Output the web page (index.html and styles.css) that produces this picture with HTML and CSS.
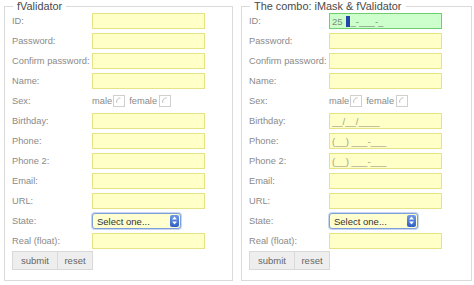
FILE: index.html
```html
<!DOCTYPE html>
<html>
<head>
<meta charset="utf-8">
<link rel="stylesheet" href="styles.css">
</head>
<body>
<div class="page">
  <form class="panel left">
    <fieldset>
      <legend>fValidator</legend>
      <div class="rows">
        <div class="row"><label>ID:</label><input class="field" type="text"></div>
        <div class="row"><label>Password:</label><input class="field" type="password"></div>
        <div class="row"><label>Confirm password:</label><input class="field" type="password"></div>
        <div class="row"><label>Name:</label><input class="field" type="text"></div>
        <div class="row"><label>Sex:</label>
          <span class="radios">
            <span class="opt">male</span><svg class="radio" width="12" height="12" viewBox="0 0 12 12"><rect x="0.5" y="0.5" width="11" height="11" fill="#fff" stroke="#cfcfcf"/><path d="M7.5 3 A3.6 3.6 0 0 0 3.8 7.8" fill="none" stroke="#b8b8b8" stroke-width="0.9"/></svg>
            <span class="opt opt2">female</span><svg class="radio r2" width="12" height="12" viewBox="0 0 12 12"><rect x="0.5" y="0.5" width="11" height="11" fill="#fff" stroke="#cfcfcf"/><path d="M7.5 3 A3.6 3.6 0 0 0 3.8 7.8" fill="none" stroke="#b8b8b8" stroke-width="0.9"/></svg>
          </span>
        </div>
        <div class="row"><label>Birthday:</label><input class="field" type="text"></div>
        <div class="row"><label>Phone:</label><input class="field" type="text"></div>
        <div class="row"><label>Phone 2:</label><input class="field" type="text"></div>
        <div class="row"><label>Email:</label><input class="field" type="text"></div>
        <div class="row"><label>URL:</label><input class="field" type="text"></div>
        <div class="row"><label>State:</label>
          <div class="select"><span>Select one...</span><span class="arrows"><svg width="9" height="11" viewBox="0 0 9 11"><path d="M4.5 1.5 L7 4.5 L2 4.5 Z M4.5 9.5 L7 6.5 L2 6.5 Z" fill="#fff"/></svg></span></div>
        </div>
        <div class="row"><label>Real (float):</label><input class="field" type="text"></div>
      </div>
      <div class="buttons"><button type="button" class="btn submit">submit</button><button type="button" class="btn reset">reset</button></div>
    </fieldset>
  </form>

  <form class="panel right">
    <fieldset>
      <legend>The combo: iMask &amp; fValidator</legend>
      <div class="rows">
        <div class="row"><label>ID:</label><div class="field ok">25<span class="cursor"></span>_-___-_</div></div>
        <div class="row"><label>Password:</label><input class="field" type="password"></div>
        <div class="row"><label>Confirm password:</label><input class="field" type="password"></div>
        <div class="row"><label>Name:</label><input class="field" type="text"></div>
        <div class="row"><label>Sex:</label>
          <span class="radios">
            <span class="opt">male</span><svg class="radio" width="12" height="12" viewBox="0 0 12 12"><rect x="0.5" y="0.5" width="11" height="11" fill="#fff" stroke="#cfcfcf"/><path d="M7.5 3 A3.6 3.6 0 0 0 3.8 7.8" fill="none" stroke="#b8b8b8" stroke-width="0.9"/></svg>
            <span class="opt opt2">female</span><svg class="radio r2" width="12" height="12" viewBox="0 0 12 12"><rect x="0.5" y="0.5" width="11" height="11" fill="#fff" stroke="#cfcfcf"/><path d="M7.5 3 A3.6 3.6 0 0 0 3.8 7.8" fill="none" stroke="#b8b8b8" stroke-width="0.9"/></svg>
          </span>
        </div>
        <div class="row"><label>Birthday:</label><input class="field" type="text" value="__/__/____"></div>
        <div class="row"><label>Phone:</label><input class="field" type="text" value="(__) ___-___"></div>
        <div class="row"><label>Phone 2:</label><input class="field" type="text" value="(__) ___-___"></div>
        <div class="row"><label>Email:</label><input class="field" type="text"></div>
        <div class="row"><label>URL:</label><input class="field" type="text"></div>
        <div class="row"><label>State:</label>
          <div class="select"><span>Select one...</span><span class="arrows"><svg width="9" height="11" viewBox="0 0 9 11"><path d="M4.5 1.5 L7 4.5 L2 4.5 Z M4.5 9.5 L7 6.5 L2 6.5 Z" fill="#fff"/></svg></span></div>
        </div>
        <div class="row"><label>Real (float):</label><input class="field" type="text"></div>
      </div>
      <div class="buttons"><button type="button" class="btn submit">submit</button><button type="button" class="btn reset">reset</button></div>
    </fieldset>
  </form>
</div>
</body>
</html>
```
FILE: styles.css
```css
* { box-sizing: border-box; }

body {
  margin: 0;
  background: #fff;
  font-family: "Liberation Sans", Arial, sans-serif;
}

.page {
  display: flex;
  gap: 8px;
  padding: 0 2px 0 4px;
}

.panel { margin: 0; }
.left { width: 229px; }
.right { width: 231px; }

fieldset {
  margin: 0;
  min-width: 0;
  border: 1px solid #dadada;
  padding: 0 7px 10px 7px;
}

legend {
  margin-left: 1px;
  font-size: 10.9px;
  line-height: 12px;
  padding: 0 4px;
  color: #4a4a4a;
}

.rows {
  display: flex;
  flex-direction: column;
  gap: 2px;
}

.row {
  display: flex;
  align-items: center;
  height: 18px;
}

.row label {
  flex: none;
  width: 80px;
  font-size: 9.3px;
  color: #8a8a8a;
  white-space: nowrap;
}

.field {
  display: flex;
  align-items: center;
  width: 113px;
  height: 16px;
  margin: 0;
  padding: 0 2px;
  border: 1px solid #e4e486;
  border-radius: 0;
  background: #ffffc8;
  font-family: "Liberation Sans", Arial, sans-serif;
  font-size: 9.5px;
  color: #a0a08a;
  outline: none;
}

.field.ok {
  background: #ccffcc;
  border-color: #6fcf6f;
  color: #7a8f7a;
}

.cursor {
  display: inline-block;
  width: 4px;
  height: 11px;
  margin: 0 1px 0 3px;
  background: #2346a8;
}

.radios {
  display: flex;
  align-items: center;
  font-size: 9.3px;
  color: #8a8a8a;
}

.radio { display: block; margin-left: 1px; }
.opt2 { margin-left: 4px; }
.radio.r2 { margin-left: 2px; }

.select {
  display: flex;
  align-items: center;
  justify-content: space-between;
  width: 89px;
  height: 16px;
  padding: 0 1px 0 4px;
  border: 1px solid #7f9fd8;
  border-radius: 3px;
  background: #ffffcf;
  box-shadow: 0 0 0 1px rgba(130, 165, 225, 0.45);
  font-size: 9.5px;
  color: #333;
}

.arrows {
  display: flex;
  width: 9px;
  height: 12px;
  border-radius: 2px;
  background: linear-gradient(#6f9ae6, #2f5fc8);
}

.buttons {
  display: flex;
  margin-top: 1px;
}

.btn {
  height: 19px;
  margin: 0;
  padding: 0;
  border: 1px solid #d9d9d9;
  border-radius: 0;
  background: #eeeeee;
  font-family: "Liberation Sans", Arial, sans-serif;
  font-size: 9.5px;
  color: #666;
}

.submit { width: 46px; }
.reset { width: 36px; margin-left: -1px; }
```
